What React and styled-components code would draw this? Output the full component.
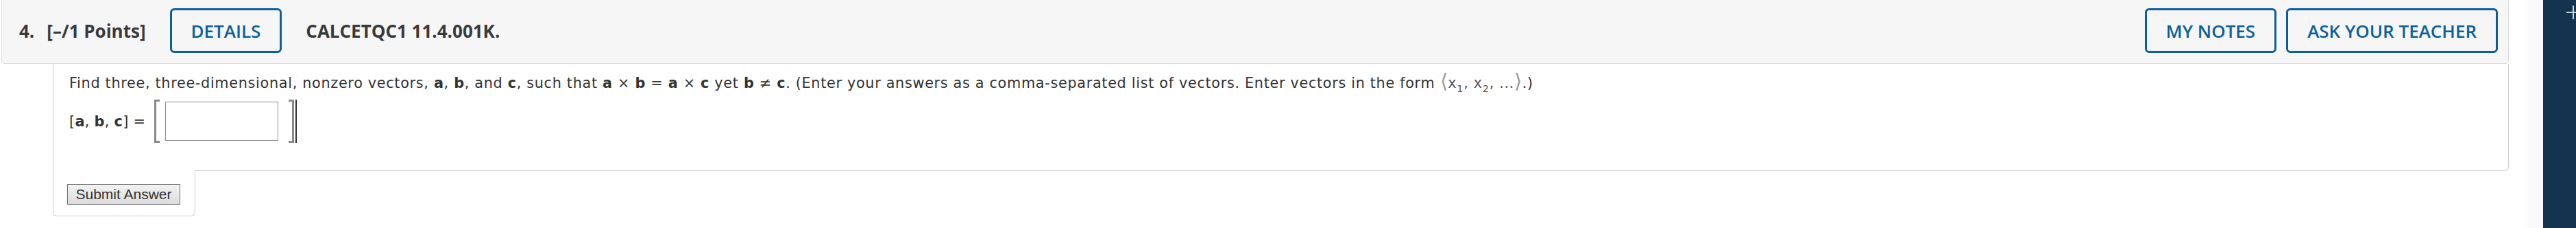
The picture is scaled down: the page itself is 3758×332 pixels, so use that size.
import styled, { createGlobalStyle } from "styled-components";

const GlobalStyle = createGlobalStyle`
  html, body {
    margin: 0;
    padding: 0;
    background: #fff;
  }
  body {
    font-family: "DejaVu Sans", Verdana, sans-serif;
    color: #333;
  }
`;

const Page = styled.div`
  display: flex;
  width: 3758px;
  height: 332px;
  overflow: hidden;
  background: #fff;
`;

const Main = styled.div`
  flex: 1;
  min-width: 0;
  padding: 0 27px 0 2px;
`;

const Strip = styled.div`
  width: 23px;
  background: #fafafa;
`;

const Sidebar = styled.div`
  width: 48px;
  box-sizing: border-box;
  padding: 7px 0 0 33px;
  background: #13334f;
  overflow: hidden;
`;

const Header = styled.div`
  display: flex;
  align-items: center;
  height: 93px;
  box-sizing: border-box;
  padding: 0 15px 3px 25px;
  background: #f6f6f6;
  border: 1px solid #dcdcdc;
  border-top: none;
  border-radius: 0 0 5px 5px;
  font-family: "Open Sans", sans-serif;
  color: #3a3a3a;
`;

const HeadText = styled.span`
  font-size: 26px;
  font-weight: 700;
  margin-left: ${(p) => p.$gap || 0}px;
  white-space: nowrap;
`;

const Spacer = styled.div`
  flex: 1;
`;

const OutlineButton = styled.button`
  height: 65px;
  margin-left: ${(p) => p.$gap || 0}px;
  padding: 0 28px;
  background: transparent;
  border: 3px solid #0a609d;
  border-radius: 6px;
  color: #0a609d;
  font-family: "Open Sans", sans-serif;
  font-size: 26px;
  font-weight: 600;
  white-space: nowrap;
  cursor: pointer;
`;

const Question = styled.div`
  margin-left: 75px;
`;

const Body = styled.div`
  padding: 13px 23px 40px;
  border: 1px solid #cfcfcf;
  border-top: none;
  border-radius: 0 0 6px 0;
`;

const Prompt = styled.p`
  margin: 0;
  font-size: 20.8px;
  line-height: 31px;
  letter-spacing: 0.67px;
  white-space: nowrap;
`;

const MathPart = styled.span`
  color: #555;
`;

const Angle = styled.span`
  color: #999;
  font-size: 1.4em;
  line-height: 0;
  font-weight: 200;
`;

const Sub = styled.sub`
  font-size: 0.7em;
  line-height: 0;
  vertical-align: -0.4em;
`;

const AnswerRow = styled.div`
  display: flex;
  align-items: center;
  height: 63px;
  margin-top: 8px;
`;

const Label = styled.span`
  font-size: 20.8px;
  letter-spacing: 0.3px;
  margin-right: 13px;
  white-space: nowrap;
`;

const Bracket = styled.div`
  width: 5px;
  height: 57px;
  border: 3px solid #8a8a8a;
  border-${(p) => (p.$side === "left" ? "right" : "left")}: none;
`;

const Cursor = styled.div`
  width: 2px;
  height: 63px;
  margin-left: 2px;
  background: #333;
`;

const AnswerInput = styled.input`
  width: 165px;
  height: 57px;
  box-sizing: border-box;
  margin: 0 15px 0 8px;
  border: 1px solid #8f8f8f;
  background: #fff;
`;

const SubmitTab = styled.div`
  width: 208px;
  box-sizing: border-box;
  margin-top: -1px;
  padding: 20px 0 16px 20px;
  background: #fff;
  border: 1px solid #cfcfcf;
  border-top: none;
  border-radius: 0 0 6px 6px;
`;

const SubmitButton = styled.button`
  display: block;
  width: 165px;
  height: 30px;
  padding: 0;
  border: 1px solid #707070;
  border-radius: 0;
  background: linear-gradient(#f3f3f3, #dcdcdc);
  color: #333;
  font-family: "Liberation Sans", Arial, sans-serif;
  font-size: 21px;
`;

const PlusIcon = () => (
  <svg width="22" height="22" viewBox="0 0 22 22">
    <path d="M11 1v20M1 11h20" stroke="#fff" strokeWidth="1.6" fill="none" />
  </svg>
);

export default function App() {
  return (
    <>
      <GlobalStyle />
      <Page>
        <Main>
          <Header>
            <HeadText>4.</HeadText>
            <HeadText $gap={18}>[–/1 Points]</HeadText>
            <OutlineButton $gap={35}>DETAILS</OutlineButton>
            <HeadText $gap={35}>CALCETQC1 11.4.001K.</HeadText>
            <Spacer />
            <OutlineButton>MY NOTES</OutlineButton>
            <OutlineButton $gap={14}>ASK YOUR TEACHER</OutlineButton>
          </Header>
          <Question>
            <Body>
              <Prompt>
                Find three, three-dimensional, nonzero vectors, <b>a</b>, <b>b</b>, and{" "}
                <b>c</b>, such that <b>a</b> × <b>b</b> = <b>a</b> × <b>c</b> yet{" "}
                <b>b</b> ≠ <b>c</b>. (Enter your answers as a comma-separated list of
                vectors. Enter vectors in the form{" "}
                <MathPart>
                  <Angle>⟨</Angle>x<Sub>1</Sub>, x<Sub>2</Sub>, ...<Angle>⟩</Angle>
                </MathPart>
                .)
              </Prompt>
              <AnswerRow>
                <Label>
                  [<b>a</b>, <b>b</b>, <b>c</b>] =
                </Label>
                <Bracket $side="left" />
                <AnswerInput type="text" />
                <Bracket $side="right" />
                <Cursor />
              </AnswerRow>
            </Body>
            <SubmitTab>
              <SubmitButton>Submit Answer</SubmitButton>
            </SubmitTab>
          </Question>
        </Main>
        <Strip />
        <Sidebar>
          <PlusIcon />
        </Sidebar>
      </Page>
    </>
  );
}
